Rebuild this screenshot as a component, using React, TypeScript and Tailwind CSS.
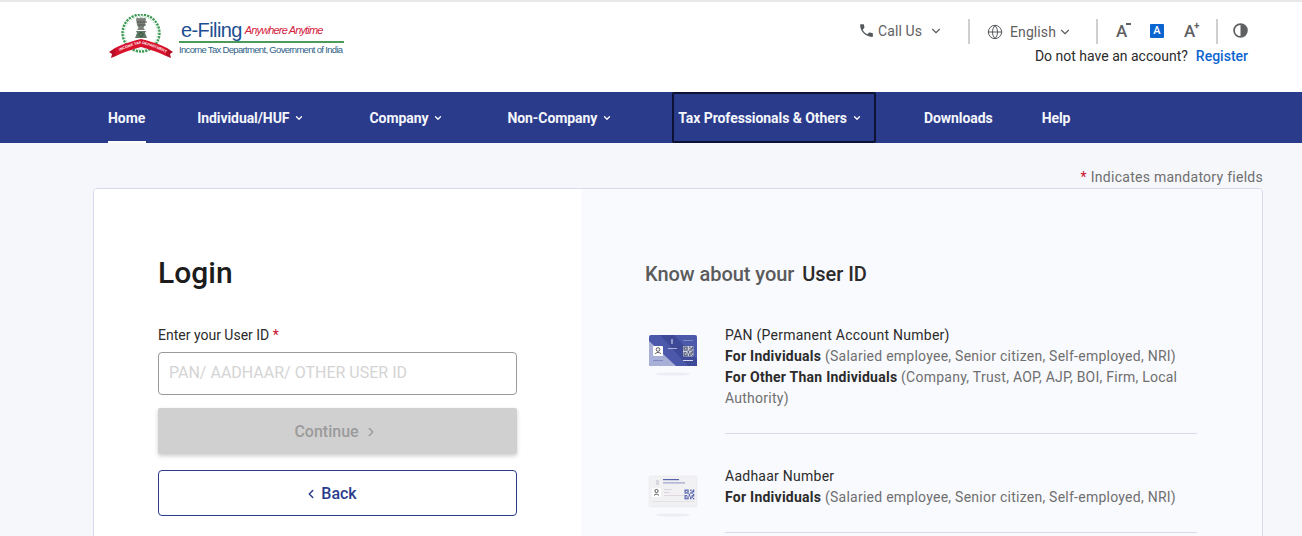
import React from "react";
import { ChevronDown, ChevronLeft, ChevronRight, Globe } from "lucide-react";

function Logo() {
  return (
    <div className="flex items-start">
      <svg width="66" height="48" viewBox="0 0 66 48" className="block">
        <circle cx="33" cy="19" r="18.5" fill="none" stroke="#3f9a55" strokeWidth="2.4" strokeDasharray="2.2 1" />
        <circle cx="33" cy="19" r="16.4" fill="none" stroke="#a8d4b2" strokeWidth="1" strokeDasharray="1.5 1.5" />
        <path d="M28 5c1-1.6 2.6-1.6 3-.6 1-1.2 3-1.2 4 0 .6-1 2.2-1 3 .6l-1 6-1.5 3 1.5 2h-8l1.5-2-1.5-3z" fill="#7d817c" />
        <path d="M29 8h10M30 11h8" stroke="#4a4f4b" strokeWidth="0.9" />
        <path d="M28 17h10l-1 2 2 5H27l2-5z" fill="#5f7a66" />
        <circle cx="33" cy="20.5" r="2" fill="none" stroke="#2f4e3a" strokeWidth="0.9" />
        <rect x="28" y="26" width="10" height="1.2" fill="#8f938d" />
        <path d="M7 34C17 29 25 27 33 25c8 2 16 4 26 9l1 7-2 1C48 37 40 35 33 33c-7 2-15 4-25 9l-2-1z" fill="#d9122c" />
        <path d="M7 34 1 38l3 2-1 4 5-2z M59 34l6 4-3 2 1 4-5-2z" fill="#b80f26" />
        <path id="rb" d="M9 38.5C18 33.5 26 31.5 33 29.5c7 2 15 4 24 9" fill="none" />
        <text fontFamily="Liberation Sans, sans-serif" fontSize="3.7" fontWeight="700" fill="#ffffff">
          <textPath href="#rb" startOffset="3">INCOME TAX DEPARTMENT</textPath>
        </text>
      </svg>
      <div className="ml-[5px] mt-[6px] w-[165px] font-['Liberation_Sans',sans-serif]">
        <div className="flex h-[20px] items-end pl-[2px] leading-[20px]">
          <span className="text-[20px] tracking-[-0.6px] text-[#1d4f91]">e-Filing</span>
          <span className="ml-[3px] whitespace-nowrap text-[11px] italic tracking-[-0.85px] text-[#d4213d]">Anywhere Anytime</span>
        </div>
        <div className="mt-[1px] h-[2px] bg-[#4e9a5b]" />
        <div className="mt-[1px] whitespace-nowrap text-[9.5px] leading-[12px] tracking-[-0.68px] text-[#2f6288]">Income Tax Department, Government of India</div>
      </div>
    </div>
  );
}

function Sep() {
  return <div className="h-[25px] w-[2px] bg-[#cfcfcf]" />;
}

function NavItem({ label, ml, active, caret = true, boxed }: { label: string; ml: string; active?: boolean; caret?: boolean; boxed?: boolean }) {
  return (
    <div className={`${ml} relative flex h-full items-center whitespace-nowrap pt-[2px] ${boxed ? "rounded-[2px] border-2 border-[#0d1433] pl-[4px] pr-[12px]" : ""}`}>
      <span className="text-[14px] font-bold tracking-[-0.07px] text-[#f4f6fb]">{label}</span>
      {caret && <ChevronDown className="mb-[2px] ml-[5px] h-[10px] w-[10px] text-white" strokeWidth={3} />}
      {active && <div className="absolute bottom-0 left-0 right-[-1px] h-[2px] bg-white" />}
    </div>
  );
}

export default function App() {
  return (
    <div className="h-[536px] w-full overflow-hidden bg-[#f5f7fb] font-['Roboto',sans-serif]">
      <header className="flex h-[92px] justify-between border-t-2 border-[#e8e8e8] bg-white pl-[108px] pr-[54px]">
        <div className="pt-[12px]">
          <Logo />
        </div>
        <div className="flex flex-col items-end pt-[17px]">
          <div className="flex h-[25px] items-center text-[14px] text-[#5f6062]">
            <svg width="17" height="17" viewBox="0 0 24 24" className="mb-[2px] fill-[#54595e]">
              <path d="M6.62 10.79c1.44 2.83 3.76 5.14 6.59 6.59l2.2-2.2c.27-.27.67-.36 1.02-.24 1.12.37 2.33.57 3.57.57.55 0 1 .45 1 1V20c0 .55-.45 1-1 1-9.39 0-17-7.61-17-17 0-.55.45-1 1-1h3.5c.55 0 1 .45 1 1 0 1.25.2 2.45.57 3.57.11.35.03.74-.25 1.02l-2.2 2.2z" />
            </svg>
            <span className="ml-[3px] tracking-[0.1px]">Call Us</span>
            <ChevronDown className="mb-[2px] ml-[7px] h-[14px] w-[14px]" strokeWidth={2} />
            <div className="ml-[25px]"><Sep /></div>
            <Globe className="ml-[17px] h-[16px] w-[16px] text-[#54595e]" strokeWidth={1.5} />
            <span className="ml-[7px] mt-[2px] tracking-[0.1px]">English</span>
            <ChevronDown className="ml-[2px] h-[14px] w-[14px]" strokeWidth={2} />
            <div className="ml-[24px]"><Sep /></div>
            <span className="relative ml-[18px] w-[16px] text-[17px] font-medium leading-none text-[#5f6062]">
              A<span className="absolute left-[10px] top-[0px] h-[1.5px] w-[5px] bg-[#5f6062]" />
            </span>
            <span className="mb-[2px] ml-[18px] flex h-[14px] w-[14px] items-center justify-center rounded-[1px] bg-[#0b65d0] text-[11px] font-medium leading-none text-white">A</span>
            <span className="relative ml-[20px] w-[16px] text-[17px] font-medium leading-none text-[#5f6062]">
              A<span className="absolute left-[10px] top-[-2px] text-[10px] font-bold leading-none">+</span>
            </span>
            <div className="ml-[16px]"><Sep /></div>
            <svg width="15" height="15" viewBox="0 0 14 14" className="mb-[2px] ml-[15px]">
              <circle cx="7" cy="7" r="6" fill="none" stroke="#5f6062" strokeWidth="1.6" />
              <path d="M7 1a6 6 0 0 1 0 12z" fill="#5f6062" />
            </svg>
          </div>
          <div className="mt-[2px] flex text-[14px] leading-[20px]">
            <span className="text-[#2b2b2b]">Do not have an account?</span>
            <span className="ml-[8px] font-medium text-[#0b65d0]">Register</span>
          </div>
        </div>
      </header>

      <nav className="flex h-[51px] items-stretch bg-[#2a3b8c] pl-[108px]">
        <NavItem label="Home" ml="ml-0" active caret={false} />
        <NavItem label="Individual/HUF" ml="ml-[52px]" />
        <NavItem label="Company" ml="ml-[65px]" />
        <NavItem label="Non-Company" ml="ml-[64px]" />
        <NavItem label="Tax Professionals & Others" ml="ml-[60px]" boxed />
        <NavItem label="Downloads" ml="ml-[48px]" caret={false} />
        <NavItem label="Help" ml="ml-[49px]" caret={false} />
      </nav>

      <div className="pl-[93px] pr-[39px]">
        <div className="flex h-[45px] items-end justify-end pb-[1px] text-[14px] leading-[20px] tracking-[0.27px] text-[#6f6f6f]">
          <span className="mr-[4px] text-[#c8102e]">*</span> Indicates mandatory fields
        </div>
        <div className="flex h-[400px] overflow-hidden rounded-[4px] border border-[#d6daec]">
          <section className="w-[487px] shrink-0 bg-white pl-[64px] pr-[64px] pt-[64px]">
            <h1 className="text-[30px] font-medium leading-[40px] text-[#1c1c1c]">Login</h1>
            <label className="mt-[32px] block text-[14px] leading-[20px] text-[#2b2b2b]">
              Enter your User ID <span className="text-[#c8102e]">*</span>
            </label>
            <div className="mt-[7px] flex h-[43px] w-[359px] items-center rounded-[4px] border border-[#9a9a9a] px-[10px] pb-[2px] text-[16px] text-[#d4d4d4]">
              PAN/ AADHAAR/ OTHER USER ID
            </div>
            <div className="mt-[13px] flex h-[46px] w-[359px] items-center justify-center rounded-[2px] bg-[#d0d0d0] pr-[3px] pt-[2px] text-[16px] font-medium text-[#9b9b9b] shadow-[0_2px_4px_rgba(0,0,0,0.2)]">
              Continue
              <ChevronRight className="ml-[5px] h-[14px] w-[14px]" strokeWidth={2.5} />
            </div>
            <div className="mt-[16px] flex h-[46px] w-[359px] items-center justify-center rounded-[4px] border border-[#2a3b8c] pr-[14px] pt-[2px] text-[16px] font-medium text-[#2a3b8c]">
              <ChevronLeft className="mr-[3px] h-[14px] w-[14px]" strokeWidth={2.5} />
              Back
            </div>
          </section>
          <section className="flex-1 bg-[#f9fafe] pl-[64px] pr-[65px] pt-[71px] text-[14px] leading-[21px] tracking-[0.25px] text-[#6f6f6f]">
            <h2 className="pt-[1px] text-[20px] font-medium leading-[26px] tracking-[-0.05px] text-[#5b5b5b]">
              Know about your <span className="ml-[3px] text-[#2b2b2b]">User ID</span>
            </h2>
            <div className="mt-[38px] flex">
              <PanCard />
              <div className="ml-[25px] flex-1 border-b border-[#d6daec] pb-[24px]">
                <div className="text-[#2b2b2b]">PAN (Permanent Account Number)</div>
                <div><b className="font-bold text-[#2b2b2b]">For Individuals</b> (Salaried employee, Senior citizen, Self-employed, NRI)</div>
                <div><b className="font-bold text-[#2b2b2b]">For Other Than Individuals</b> (Company, Trust, AOP, AJP, BOI, Firm, Local Authority)</div>
              </div>
            </div>
            <div className="mt-[32px] flex">
              <AadhaarCard />
              <div className="ml-[25px] flex-1 border-b border-[#d6daec] pb-[24px]">
                <div className="text-[#2b2b2b]">Aadhaar Number</div>
                <div><b className="font-bold text-[#2b2b2b]">For Individuals</b> (Salaried employee, Senior citizen, Self-employed, NRI)</div>
              </div>
            </div>
          </section>
        </div>
      </div>
    </div>
  );
}

const QR_CELLS = ["1110101", "1010011", "1110110", "0001001", "1101011", "1010110", "1110101"];

function Qr({ x, y, c, bg }: { x: number; y: number; c: string; bg?: string }) {
  return (
    <g>
      {bg && <rect x={x} y={y} width="10.5" height="10.5" fill={bg} />}
      {QR_CELLS.map((row, r) =>
        row.split("").map((v, i) =>
          v === "1" ? <rect key={`${r}-${i}`} x={x + 0.5 + i * 1.4} y={y + 0.5 + r * 1.4} width="1.4" height="1.4" fill={c} /> : null
        )
      )}
    </g>
  );
}

function PanCard() {
  return (
    <svg width="52" height="44" viewBox="0 0 52 44" className="ml-[3px] mt-[9px] shrink-0">
      <rect x="1" y="1" width="48" height="31" rx="2" fill="#4c59aa" />
      <path d="M1 7 28 32H3a2 2 0 0 1-2-2z" fill="#a9b0d8" />
      <path d="M12 1h14l23 24v7h-9z" fill="#3e4a98" />
      <rect x="5" y="12" width="10" height="10" rx="1" fill="#fff" />
      <circle cx="10" cy="15.5" r="1.8" fill="none" stroke="#333" strokeWidth="0.8" />
      <path d="M7 20c1-2 5-2 6 0" fill="none" stroke="#333" strokeWidth="0.8" />
      <Qr x={35} y={12} c="#5a5f78" bg="#cdd0e0" />
      <rect x="35" y="26" width="10" height="1" fill="#d5d8ec" />
      <rect x="5" y="26" width="10" height="1" fill="#7f88bf" />
      <rect x="23" y="5" width="2" height="5" fill="#8e96c9" />
      <rect x="20" y="14" width="9" height="0.8" fill="#c6cae6" />
      <rect x="35" y="6" width="10" height="0.8" fill="#8e96c9" />
      <ellipse cx="25" cy="40" rx="17" ry="1.6" fill="#eceef6" />
    </svg>
  );
}

function AadhaarCard() {
  return (
    <svg width="52" height="44" viewBox="0 0 52 44" className="ml-[3px] mt-[9px] shrink-0">
      <rect x="1" y="1" width="48" height="31" rx="1.5" fill="#f1f1f3" stroke="#e9e9ee" strokeWidth="0.6" />
      <rect x="15" y="4" width="16" height="1.2" fill="#5763ad" />
      <rect x="15" y="7.4" width="22" height="1" fill="#8a92c5" />
      <rect x="8" y="5" width="3" height="5" fill="#d9d9dd" />
      <rect x="4" y="13" width="9" height="9" rx="1" fill="#fff" />
      <circle cx="8.5" cy="16" r="1.6" fill="none" stroke="#333" strokeWidth="0.8" />
      <path d="M6 20.5c1-1.8 4-1.8 5 0" fill="none" stroke="#333" strokeWidth="0.8" />
      <rect x="16" y="14" width="8" height="1" fill="#d8d8de" />
      <rect x="16" y="17" width="6" height="1" fill="#d8d8de" />
      <rect x="16" y="20" width="22" height="1" fill="#e0d8dc" />
      <Qr x={36} y={14} c="#5763ad" />
      <rect x="4" y="26" width="42" height="1" fill="#e2e2e7" />
      <ellipse cx="25" cy="40" rx="17" ry="1.6" fill="#eceef6" />
    </svg>
  );
}
